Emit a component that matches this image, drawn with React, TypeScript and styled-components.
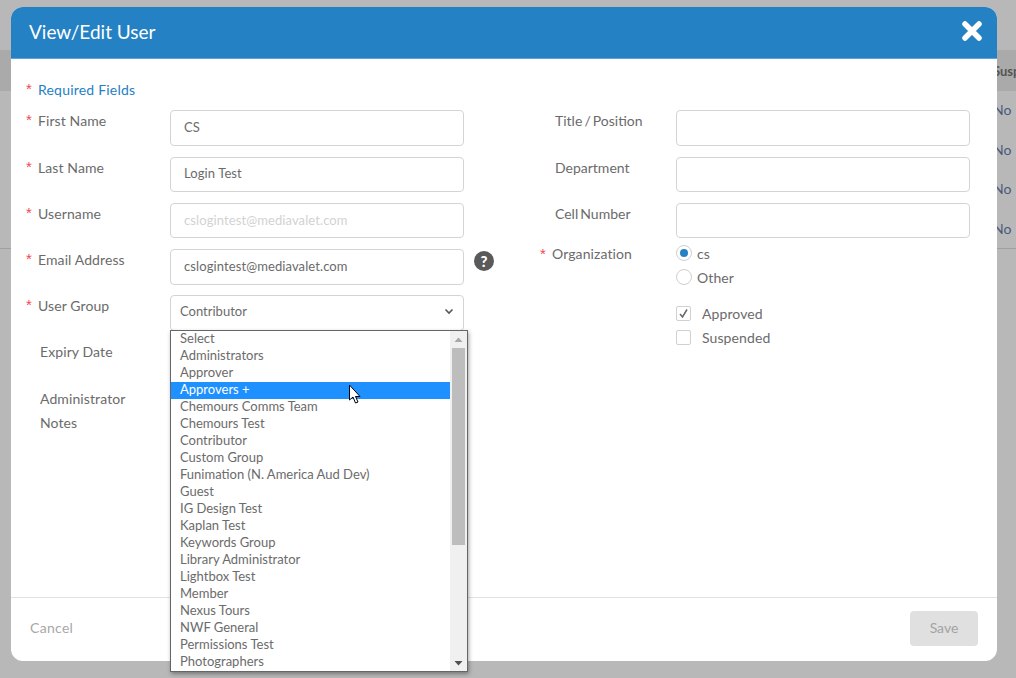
import React from "react";
import styled, { createGlobalStyle } from "styled-components";

const Global = createGlobalStyle`
  html, body { margin: 0; padding: 0; width: 1016px; height: 678px; overflow: hidden; background: #b8b8b8; }
  * { box-sizing: border-box; }
  body { font-family: Lato, "Open Sans", sans-serif; color: #6b6b6b; }
`;

const Page = styled.div`
  position: relative;
  width: 1016px;
  height: 678px;
  overflow: hidden;
  background: #b8b8b8;
  padding-top: 50px;
`;
const BgHead = styled.div`
  height: 41px;
  background: #aaaaaa;
  display: flex;
  justify-content: flex-end;
  align-items: center;
`;
const BgHeadText = styled.span`
  width: 23px;
  overflow: hidden;
  font-size: 13px;
  font-weight: 700;
  color: #555;
  white-space: nowrap;
`;
const BgRows = styled.div`
  height: 159px;
  margin-top: -1px;
  border-bottom: 1px solid #a0a0a0;
`;
const BgRow = styled.div`
  height: 39.5px;
  display: flex;
  justify-content: flex-end;
  align-items: center;
  font-size: 14px;
  color: #4a5878;
`;
const BgCell = styled.span`
  width: 23px;
  overflow: hidden;
`;

const Modal = styled.div`
  position: absolute;
  left: 11px;
  top: 7px;
  width: 986px;
  height: 654px;
  background: #fff;
  border-radius: 12px;
  display: flex;
  flex-direction: column;
  overflow: hidden;
`;
const Header = styled.header`
  height: 52px;
  flex: none;
  background: #2481c4;
  border-bottom: 1px solid #5aa5da;
  display: flex;
  align-items: center;
  justify-content: space-between;
  padding: 0 14px 3px 18px;
`;
const Title = styled.h1`
  margin: 0;
  font-size: 19px;
  font-weight: 400;
  color: #fff;
`;
const Body = styled.main`
  flex: 1;
  padding: 21px 27px 0 15px;
`;
const Required = styled.div`
  display: flex;
  align-items: center;
  height: 18px;
  font-size: 14px;
  letter-spacing: 0.2px;
  color: #2481c4;
  margin-bottom: 12.25px;
`;
const Star = styled.span`
  color: #f0484e;
  font-family: "Liberation Sans", sans-serif;
  font-size: 15px;
  width: 12px;
  flex: none;
  line-height: 1;
  position: relative;
  top: -1px;
`;
const Columns = styled.div`
  display: flex;
  justify-content: space-between;
`;
const Column = styled.div`
  width: 438px;
  display: flex;
  flex-direction: column;
`;
const RightColumn = styled(Column)`
  width: 430px;
`;
const Row = styled.div`
  display: flex;
  height: 46.25px;
  position: relative;
`;
const Label = styled.label`
  width: 144px;
  height: 24px;
  margin-top: -1px;
  flex: none;
  display: flex;
  align-items: baseline;
  font-size: 14px;
  line-height: 24px;
  letter-spacing: 0.1px;
  color: #6b6b6b;
`;
const RightLabel = styled(Label)`
  width: 136px;
  padding-left: 15px;
  letter-spacing: 0;
  word-spacing: -1.5px;
`;
const OrgLabel = styled(Label)`
  width: 136px;
  align-items: center;
  height: 14px;
  margin-top: 6px;
`;
const TextBox = styled.input`
  width: 294px;
  height: 35.5px;
  border: 1px solid #d4d4d4;
  border-radius: 4px;
  padding: 0 13px 2px;
  font: 13px Lato, sans-serif;
  letter-spacing: 0.1px;
  color: #6b6b6b;
  background: #fff;
  outline: none;
  &:disabled { color: #d2d2d2; }
`;
const SelectBox = styled.div`
  width: 294px;
  height: 35.5px;
  border: 1px solid #d4d4d4;
  border-radius: 4px;
  padding: 0 9px 4px;
  font-size: 13px;
  color: #6b6b6b;
  display: flex;
  align-items: center;
  justify-content: space-between;
`;
const Help = styled.span`
  position: absolute;
  left: 448px;
  top: 2px;
  width: 20px;
  height: 20px;
  border-radius: 50%;
  background: #5a5a5a;
  color: #fff;
  font-size: 15px;
  font-weight: 900;
  display: flex;
  align-items: center;
  justify-content: center;
`;
const LowerLabels = styled.div`
  margin-top: -2px;
  font-size: 14px;
  line-height: 24px;
  letter-spacing: 0.1px;
  color: #6b6b6b;
`;
const PlainLabel = styled.div<{ $mb: number }>`
  padding-left: 14px;
  margin-bottom: ${(p) => p.$mb}px;
`;
const Org = styled.div`
  display: flex;
  margin-top: -8px;
`;
const Choices = styled.div`
  display: flex;
  flex-direction: column;
`;
const Choice = styled.div`
  display: flex;
  align-items: center;
  height: 24px;
  font-size: 14px;
  letter-spacing: 0.1px;
  color: #6b6b6b;
`;
const Radio = styled.span<{ $on?: boolean }>`
  width: 16px;
  height: 16px;
  border-radius: 50%;
  border: 1px solid #cfcfcf;
  margin-right: 5px;
  display: flex;
  align-items: center;
  justify-content: center;
  &::after {
    content: "";
    width: 8px;
    height: 8px;
    border-radius: 50%;
    background: ${(p) => (p.$on ? "#2481c4" : "transparent")};
  }
`;
const Check = styled.span`
  width: 15px;
  height: 15px;
  border: 1px solid #d0d0d0;
  border-radius: 2px;
  margin-right: 11px;
  display: flex;
  align-items: center;
  justify-content: center;
`;
const Checks = styled.div`
  margin-top: 12px;
`;
const Footer = styled.footer`
  height: 64px;
  flex: none;
  border-top: 1px solid #e2e2e2;
  display: flex;
  align-items: center;
  justify-content: space-between;
  padding: 0 19px 4px 19px;
`;
const Cancel = styled.span`
  font-size: 14px;
  letter-spacing: 0.3px;
  color: #a8a8a8;
`;
const Save = styled.button`
  width: 68px;
  height: 35px;
  margin-top: 2px;
  padding: 0 0 2px;
  border: none;
  border-radius: 4px;
  background: #e0e0e0;
  color: #a3a3a3;
  font: 14px Lato, sans-serif;
`;
const Dropdown = styled.div`
  position: absolute;
  left: 170px;
  top: 330px;
  width: 298px;
  height: 342px;
  background: #fff;
  border: 1px solid #666;
  box-shadow: 1px 2px 4px rgba(0, 0, 0, 0.35);
  display: flex;
  overflow: hidden;
`;
const Options = styled.ul`
  list-style: none;
  margin: 0;
  padding: 0;
  flex: 1;
`;
const Option = styled.li<{ $active?: boolean }>`
  height: 17px;
  line-height: 15px;
  padding-left: 9px;
  font-size: 13px;
  white-space: nowrap;
  color: ${(p) => (p.$active ? "#fff" : "#6b6b6b")};
  background: ${(p) => (p.$active ? "#1e90ff" : "transparent")};
`;
const Scrollbar = styled.div`
  width: 17px;
  flex: none;
  background: #f0f0f0;
  display: flex;
  flex-direction: column;
  align-items: center;
  padding-top: 6px;
`;
const Thumb = styled.div`
  width: 13px;
  height: 197px;
  background: #bdbdbd;
  margin-top: 6px;
`;
const Spacer = styled.div`
  flex: 1;
`;
const ArrowDown = styled.svg`
  margin-bottom: 5px;
`;
const Cursor = styled.svg`
  position: absolute;
  left: 348px;
  top: 384px;
`;

const groups = [
  "Select", "Administrators", "Approver", "Approvers +", "Chemours Comms Team", "Chemours Test",
  "Contributor", "Custom Group", "Funimation (N. America Aud Dev)", "Guest", "IG Design Test",
  "Kaplan Test", "Keywords Group", "Library Administrator", "Lightbox Test", "Member",
  "Nexus Tours", "NWF General", "Permissions Test", "Photographers",
];

const ReqLabel = ({ children }: { children: React.ReactNode }) => (
  <Label>
    <Star>*</Star>
    {children}
  </Label>
);

export default function App() {
  return (
    <Page>
      <Global />
      <BgHead>
        <BgHeadText>Susp</BgHeadText>
      </BgHead>
      <BgRows>
        {[0, 1, 2, 3].map((i) => (
          <BgRow key={i}>
            <BgCell>No</BgCell>
          </BgRow>
        ))}
      </BgRows>

      <Modal>
        <Header>
          <Title>View/Edit User</Title>
          <svg width="22" height="22" viewBox="0 0 22 22" aria-label="Close">
            <path d="M4 4 L18 18 M18 4 L4 18" stroke="#fff" strokeWidth="5.5" strokeLinecap="round" />
          </svg>
        </Header>
        <Body>
          <Required>
            <Star>*</Star>
            Required Fields
          </Required>
          <Columns>
            <Column>
              <Row>
                <ReqLabel>First Name</ReqLabel>
                <TextBox readOnly value="CS" />
              </Row>
              <Row>
                <ReqLabel>Last Name</ReqLabel>
                <TextBox readOnly value="Login Test" />
              </Row>
              <Row>
                <ReqLabel>Username</ReqLabel>
                <TextBox disabled value="cslogintest@mediavalet.com" />
              </Row>
              <Row>
                <ReqLabel>Email Address</ReqLabel>
                <TextBox readOnly value="cslogintest@mediavalet.com" />
                <Help>?</Help>
              </Row>
              <Row>
                <ReqLabel>User Group</ReqLabel>
                <SelectBox>
                  Contributor
                  <svg width="10" height="10" viewBox="0 0 10 10">
                    <path d="M1.5 3.5 L5 7 L8.5 3.5" fill="none" stroke="#555" strokeWidth="1.6" />
                  </svg>
                </SelectBox>
              </Row>
              <LowerLabels>
                <PlainLabel $mb={23}>Expiry Date</PlainLabel>
                <PlainLabel $mb={0}>
                  Administrator
                  <br />
                  Notes
                </PlainLabel>
              </LowerLabels>
            </Column>
            <RightColumn>
              <Row>
                <RightLabel>Title / Position</RightLabel>
                <TextBox readOnly value="" />
              </Row>
              <Row>
                <RightLabel>Department</RightLabel>
                <TextBox readOnly value="" />
              </Row>
              <Row>
                <RightLabel>Cell Number</RightLabel>
                <TextBox readOnly value="" />
              </Row>
              <Org>
                <OrgLabel>
                  <Star>*</Star>
                  Organization
                </OrgLabel>
                <Choices>
                  <Choice>
                    <Radio $on />
                    cs
                  </Choice>
                  <Choice>
                    <Radio />
                    Other
                  </Choice>
                  <Checks>
                    <Choice>
                      <Check>
                        <svg width="11" height="11" viewBox="0 0 11 11">
                          <path d="M2 6 L4.5 9 L9 1.5" fill="none" stroke="#666" strokeWidth="1.5" />
                        </svg>
                      </Check>
                      Approved
                    </Choice>
                    <Choice>
                      <Check />
                      Suspended
                    </Choice>
                  </Checks>
                </Choices>
              </Org>
            </RightColumn>
          </Columns>
        </Body>
        <Footer>
          <Cancel>Cancel</Cancel>
          <Save>Save</Save>
        </Footer>
      </Modal>

      <Dropdown>
        <Options>
          {groups.map((g) => (
            <Option key={g} $active={g === "Approvers +"}>
              {g}
            </Option>
          ))}
        </Options>
        <Scrollbar>
          <svg width="9" height="5" viewBox="0 0 9 5">
            <path d="M0.5 5 L4.5 0.5 L8.5 5 Z" fill="#a8a8a8" />
          </svg>
          <Thumb />
          <Spacer />
          <ArrowDown width="9" height="5" viewBox="0 0 9 5">
            <path d="M0.5 0 L4.5 4.5 L8.5 0 Z" fill="#505050" />
          </ArrowDown>
        </Scrollbar>
      </Dropdown>

      <Cursor width="14" height="22" viewBox="0 0 14 22">
        <path
          d="M1.5 1 L1.5 16 L5 13 L7.5 19 L10 18 L7.5 12.5 L12 12.5 Z"
          fill="#fff"
          stroke="#000"
          strokeWidth="1"
        />
      </Cursor>
    </Page>
  );
}
